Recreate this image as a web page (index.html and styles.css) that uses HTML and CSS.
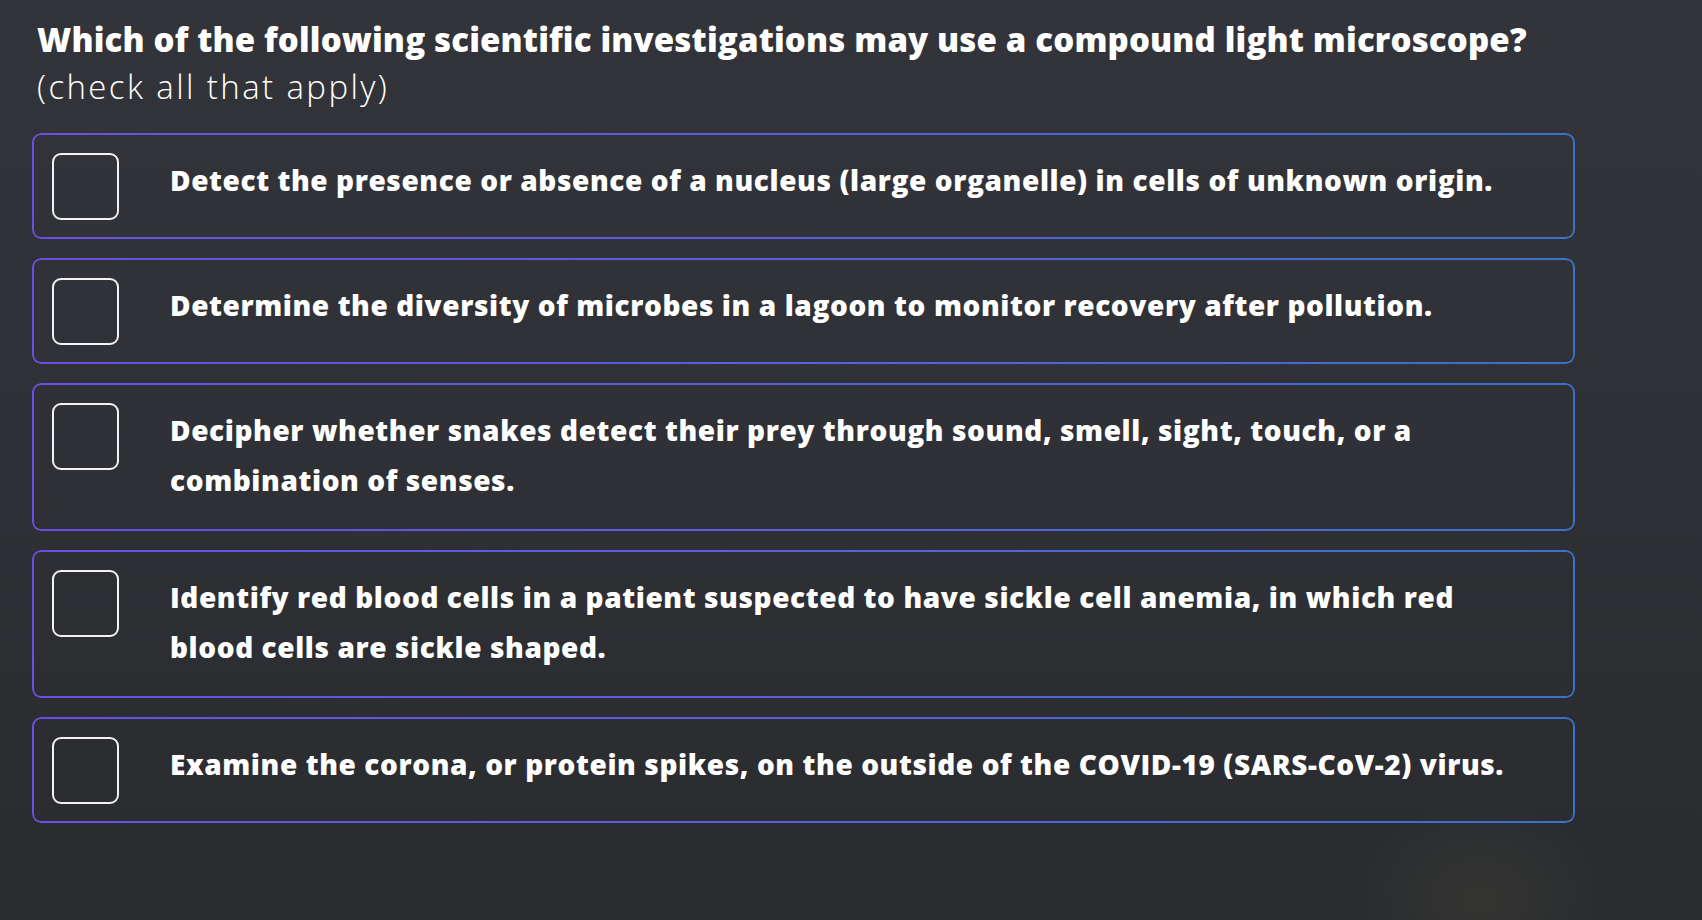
FILE: index.html
```html
<!DOCTYPE html>
<html lang="en">
<head>
<meta charset="utf-8">
<title>Compound light microscope question</title>
<link rel="stylesheet" href="styles.css">
</head>
<body>
<main class="page">
  <h1 class="question">
    <span class="question-main">Which of the following scientific investigations may use a compound light microscope?</span>
    <span class="question-hint">(check all that apply)</span>
  </h1>
  <ul class="options">
    <li class="option"><span class="checkbox"></span><p class="option-text">Detect the presence or absence of a nucleus (large organelle) in cells of unknown origin.</p></li>
    <li class="option"><span class="checkbox"></span><p class="option-text">Determine the diversity of microbes in a lagoon to monitor recovery after pollution.</p></li>
    <li class="option"><span class="checkbox"></span><p class="option-text">Decipher whether snakes detect their prey through sound, smell, sight, touch, or a combination of senses.</p></li>
    <li class="option"><span class="checkbox"></span><p class="option-text">Identify red blood cells in a patient suspected to have sickle cell anemia, in which red blood cells are sickle shaped.</p></li>
    <li class="option"><span class="checkbox"></span><p class="option-text">Examine the corona, or protein spikes, on the outside of the COVID-19 (SARS-CoV-2) virus.</p></li>
  </ul>
</main>
</body>
</html>
```
FILE: styles.css
```css
html, body {
  margin: 0;
  padding: 0;
  height: 100%;
}
body {
  background:
    radial-gradient(ellipse 180px 140px at 1480px 900px, rgba(70, 72, 55, 0.35), transparent 70%),
    linear-gradient(180deg, #333439 0%, #303136 45%, #2a2b2f 100%);
  color: #ffffff;
  font-family: "Open Sans", "Liberation Sans", sans-serif;
  overflow: hidden;
}
.page {
  padding: 16px 0 0 32px;
  width: 1543px;
}
.question {
  margin: 0 0 23px 0;
  padding-left: 5px;
  font-size: 33px;
  line-height: 47px;
  font-weight: 800;
  letter-spacing: 0.15px;
}
.question-main,
.question-hint {
  display: block;
}
.question-hint {
  font-weight: 300;
  letter-spacing: 2.4px;
}
.options {
  list-style: none;
  margin: 0;
  padding: 0;
  display: flex;
  flex-direction: column;
  gap: 19px;
}
.option {
  position: relative;
  display: flex;
  align-items: flex-start;
  gap: 51px;
  padding: 17.5px 60px 17.5px 18px;
  border: 2px solid transparent;
  border-radius: 9px;
}
.option::before {
  content: "";
  position: absolute;
  inset: -2px;
  border-radius: 9px;
  padding: 2px;
  background: linear-gradient(90deg, #6a4fe6 0%, #5a5ee0 45%, #3a72cb 100%);
  -webkit-mask: linear-gradient(#000 0 0) content-box, linear-gradient(#000 0 0);
  -webkit-mask-composite: xor;
  mask-composite: exclude;
  pointer-events: none;
}
.checkbox {
  flex: 0 0 auto;
  width: 63px;
  height: 63px;
  border: 2px solid #f2f2f2;
  border-radius: 9px;
}
.option-text {
  margin: 2.5px 0 6.5px 0;
  font-size: 28px;
  line-height: 50px;
  font-weight: 800;
  letter-spacing: 0.6px;
}
```
